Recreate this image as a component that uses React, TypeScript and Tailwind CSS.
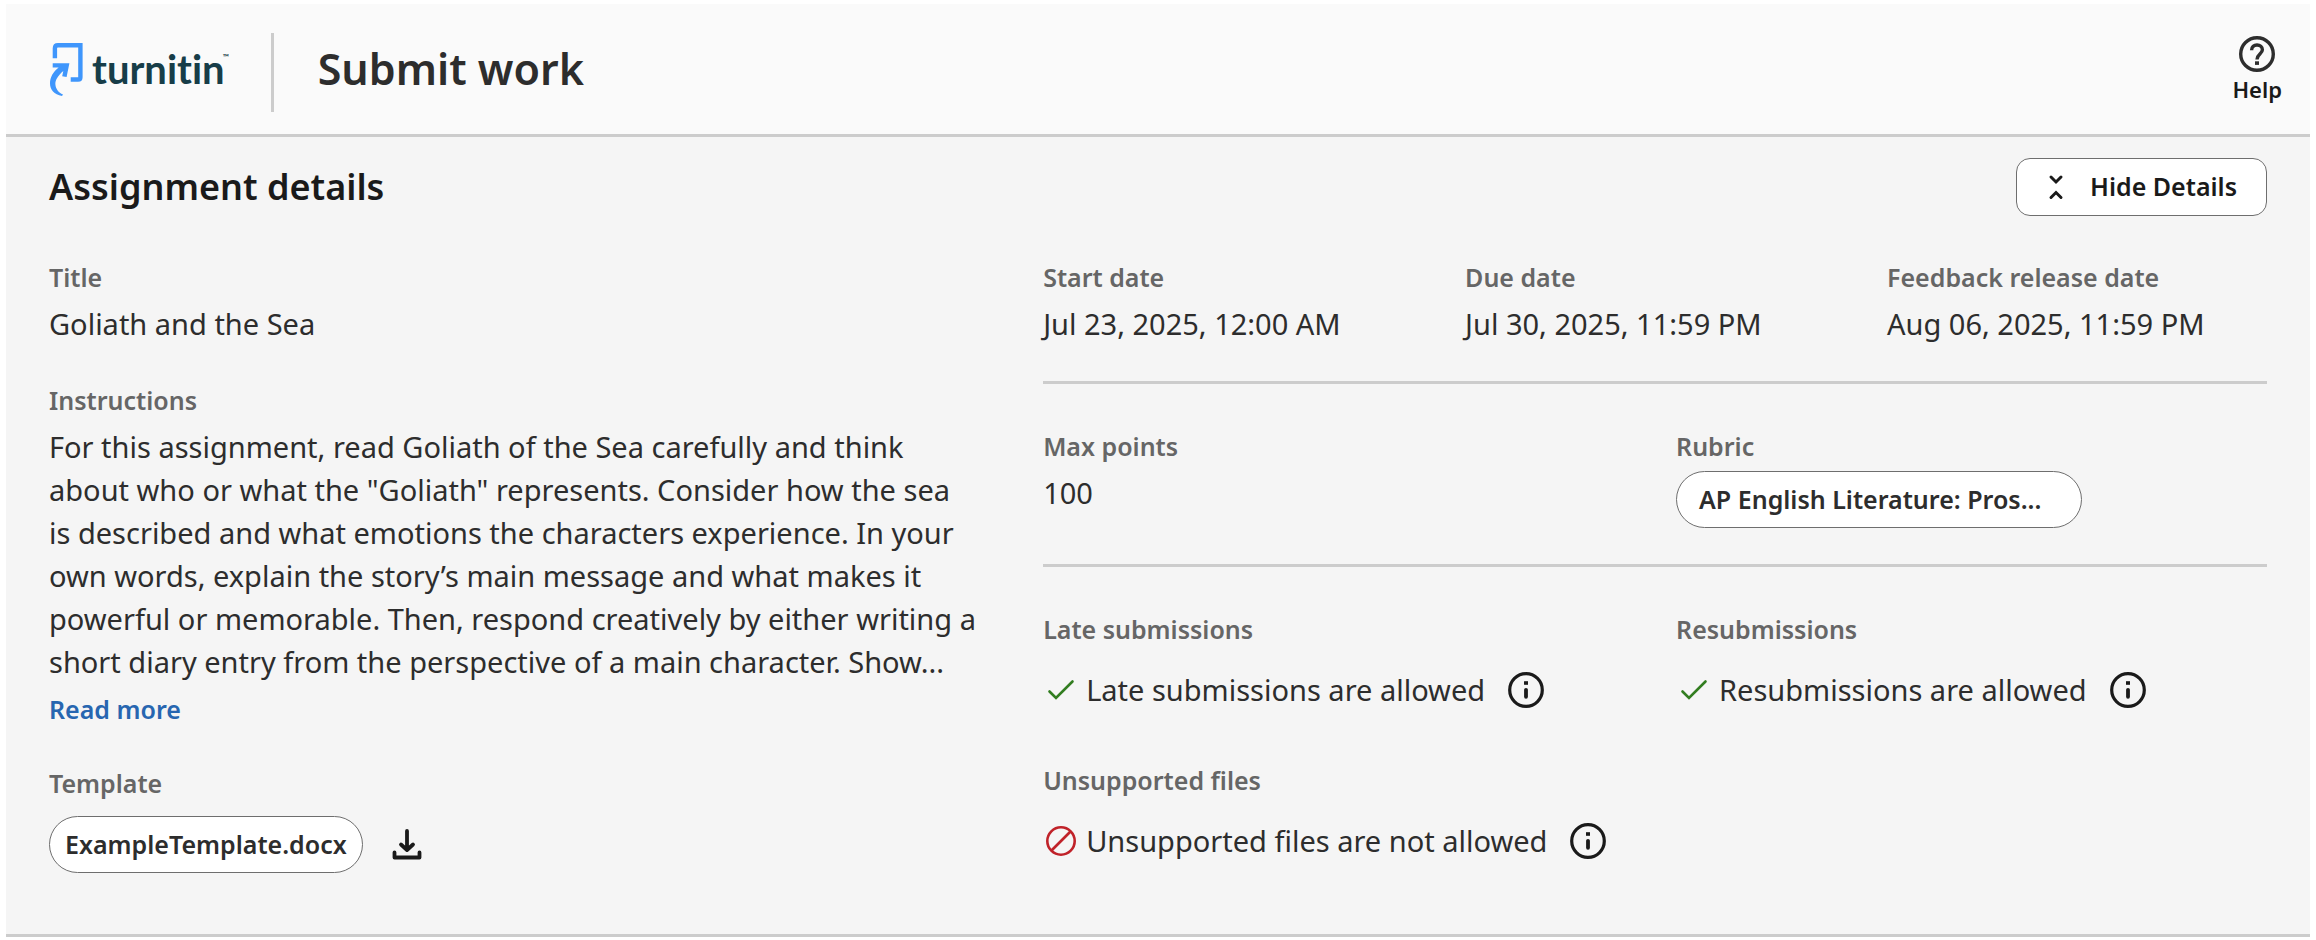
import type { ReactNode } from 'react'

function Field({ label, children }: { label: string; children: ReactNode }) {
  return (
    <div className="flex flex-col items-start">
      <h3 className="text-[25px] leading-[38px] font-semibold text-[#666666]">{label}</h3>
      {children}
    </div>
  )
}

function Value({ children }: { children: ReactNode }) {
  return <p className="mt-[6px] text-[29px] leading-[43px]">{children}</p>
}

function Logo() {
  return (
    <svg viewBox="0 0 36 56" className="h-14 w-9" fill="none" aria-hidden="true">
      <path d="M5.9 17.3V7.2Q5.9 4.2 8.9 4.2H31.4V36.2Q31.4 38.5 29.1 38.5H21.7" stroke="#3f96fc" strokeWidth="4.4" />
      <path
        d="M3.7 22.3H20.4L17.6 36L13.2 35.2L14.3 30C8.5 35 6 39.5 6.4 43.5C6.8 48 9.5 51.5 14 53.6L13 55C5 53.5 1 48.5 1 42.5C1 36.5 4 31 9.6 26.6H3.7Z"
        fill="#3f96fc"
      />
    </svg>
  )
}

function HelpIcon() {
  return (
    <svg viewBox="0 0 36 36" className="h-9 w-9" fill="none" stroke="#2d2d2d" strokeWidth="3.4" aria-hidden="true">
      <circle cx="18" cy="18" r="16.3" />
      <path d="M12.6 14.2C12.6 10.9 15 9 18 9S23.4 10.9 23.4 13.8C23.4 17.9 18 18.3 18 23.4" />
      <path d="M18 25.3V28.9" strokeWidth="4" />
    </svg>
  )
}

function InfoButton({ label }: { label: string }) {
  return (
    <button aria-label={label} className="ml-[23px]">
      <svg viewBox="0 0 36 36" className="h-9 w-9" fill="none" stroke="#1a1a1a" strokeWidth="3.2" aria-hidden="true">
        <circle cx="18" cy="18" r="16.3" />
        <path d="M18 17.8V24.8" strokeWidth="3.8" strokeLinecap="round" />
        <path d="M18 9.2V12.8" strokeWidth="4" />
      </svg>
    </button>
  )
}

function CheckIcon() {
  return (
    <svg viewBox="0 0 36 36" className="h-9 w-9" fill="none" stroke="#327d20" strokeWidth="2.6" aria-hidden="true">
      <path d="M6.5 19.5L13 26L29.5 9.5" strokeLinecap="round" />
    </svg>
  )
}

function BlockedIcon() {
  return (
    <svg viewBox="0 0 36 36" className="h-9 w-9" fill="none" stroke="#c02229" strokeWidth="2.6" aria-hidden="true">
      <circle cx="18" cy="18" r="13.7" />
      <path d="M8.5 27.5L27.5 8.5" />
    </svg>
  )
}

function Status({ icon, text, info }: { icon: ReactNode; text: string; info: string }) {
  return (
    <div className="mt-[13px] flex h-[57px] items-center">
      {icon}
      <span className="ml-[7px] text-[29px] leading-[43px]">{text}</span>
      <InfoButton label={info} />
    </div>
  )
}

export default function App() {
  return (
    <div className="bg-white px-[6px] pt-[4px] font-['Noto_Sans',sans-serif] text-[#2d2d2d]">
      <header className="flex items-center justify-between border-b-3 border-[#cccccc] bg-[#fafafa] pr-7 pl-[43px]">
        <div className="flex h-[130px] items-center">
          <a href="#" className="flex items-center">
            <Logo />
            <span className="relative ml-[7px] font-['Lato',sans-serif] text-[40px] leading-[50px] font-bold text-[#173d48] [font-variant-ligatures:none]">
              turnitin
              <span className="absolute top-1 right-[-4px] text-[8px] leading-[18px]">™</span>
            </span>
          </a>
          <div className="mt-[7px] ml-[46px] h-[79px] w-[3px] bg-[#cccccc]" />
          <h1 className="ml-11 text-[43px] leading-[58px] font-semibold">Submit work</h1>
        </div>
        <button className="flex flex-col items-center pt-[2px]">
          <HelpIcon />
          <span className="mt-[2px] text-[22px] leading-[30px] font-semibold text-[#1a1a1a]">Help</span>
        </button>
      </header>

      <main className="border-b-3 border-[#cccccc] bg-[#f5f5f5] px-[43px] pt-[21px] pb-[61px]">
        <div className="flex items-center justify-between">
          <h2 className="text-[36px] leading-[54px] font-semibold text-[#1a1a1a]">Assignment details</h2>
          <button className="flex h-[58px] items-center rounded-[14px] border border-[#6e6e6e] bg-white px-[29px] text-[25px] font-semibold text-[#1a1a1a]">
            <svg viewBox="0 0 20 30" className="mr-6 h-[30px] w-5" fill="none" stroke="#1a1a1a" strokeWidth="3" strokeLinecap="round" aria-hidden="true">
              <path d="M5 5L10 10L15 5M5 25.5L10 20.5L15 25.5" />
            </svg>
            Hide Details
          </button>
        </div>

        <div className="mt-[42px] grid grid-cols-[19fr_25fr] gap-16">
          {/* Assignment text and template */}
          <div className="flex flex-col gap-9">
            <Field label="Title">
              <Value>Goliath and the Sea</Value>
            </Field>
            <Field label="Instructions">
              <Value>
                For this assignment, read Goliath of the Sea carefully and think about who or what the "Goliath"
                represents. Consider how the sea is&nbsp;described and what emotions the characters experience. In your
                own words, explain the story’s main message and what makes it powerful or memorable. Then, respond
                creatively by either writing a short diary entry from the perspective of a main character. Show...
              </Value>
              <button className="mt-[7px] text-[25px] leading-[38px] font-semibold text-[#2766b0]">Read more</button>
            </Field>
            <Field label="Template">
              <div className="mt-[14px] flex items-center gap-7">
                <button className="h-[57px] rounded-full border border-[#6e6e6e] bg-white px-[15px] text-[25px] font-semibold">
                  ExampleTemplate.docx
                </button>
                <button aria-label="Download template">
                  <svg viewBox="0 0 32 32" className="h-8 w-8" fill="none" stroke="#1a1a1a" strokeWidth="3.8" strokeLinecap="round" strokeLinejoin="round" aria-hidden="true">
                    <path d="M16 2V20.5M10 15.5L16 21L22 15.5M3.5 23.5V28.5H28.5V23.5" />
                  </svg>
                </button>
              </div>
            </Field>
          </div>

          {/* Dates, grading and submission rules */}
          <div>
            <div className="grid grid-cols-3 gap-[42px]">
              <Field label="Start date">
                <Value>Jul 23, 2025, 12:00 AM</Value>
              </Field>
              <Field label="Due date">
                <Value>Jul 30, 2025, 11:59 PM</Value>
              </Field>
              <Field label="Feedback release date">
                <Value>Aug 06, 2025, 11:59 PM</Value>
              </Field>
            </div>
            <hr className="mt-9 mb-[43px] border-t-3 border-[#cccccc]" />
            <div className="grid grid-cols-2 gap-[42px]">
              <Field label="Max points">
                <Value>100</Value>
              </Field>
              <Field label="Rubric">
                <button className="mt-[6px] h-[57px] w-[406px] rounded-full border border-[#6e6e6e] bg-white px-[22px] text-left text-[25px] font-semibold">
                  AP English Literature: Pros...
                </button>
              </Field>
            </div>
            <hr className="mt-9 mb-[43px] border-t-3 border-[#cccccc]" />
            <div className="grid grid-cols-2 gap-x-[42px] gap-y-[43px]">
              <Field label="Late submissions">
                <Status icon={<CheckIcon />} text="Late submissions are allowed" info="About late submissions" />
              </Field>
              <Field label="Resubmissions">
                <Status icon={<CheckIcon />} text="Resubmissions are allowed" info="About resubmissions" />
              </Field>
              <Field label="Unsupported files">
                <Status icon={<BlockedIcon />} text="Unsupported files are not allowed" info="About unsupported files" />
              </Field>
            </div>
          </div>
        </div>
      </main>
    </div>
  )
}
